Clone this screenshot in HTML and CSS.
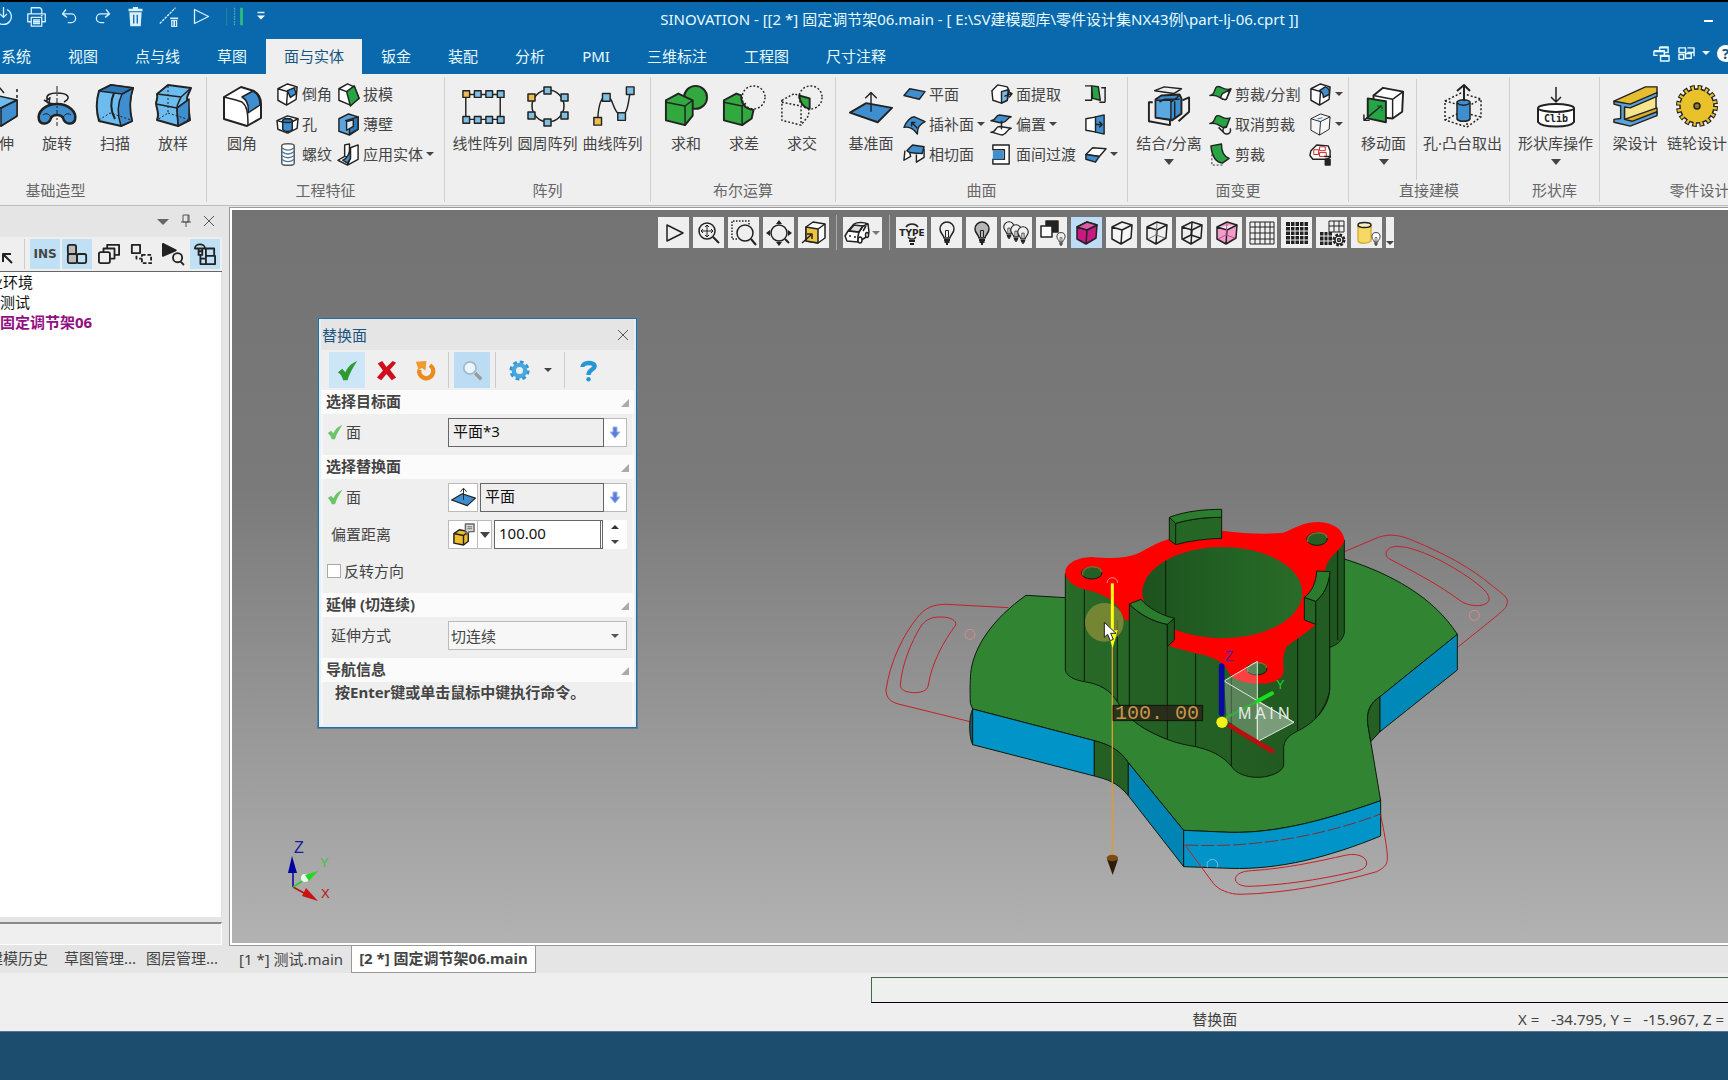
FILE: index.html
```
<!DOCTYPE html>
<html lang="zh-CN">

<head>
    <meta charset="UTF-8">
    <meta name="viewport" content="width=device-width, initial-scale=1.0">
    <title>SINOVATION</title>
    <link rel="stylesheet" href="styles.css">
</head>

<body>
    <!-- shared shapes -->
    <svg class="defs" aria-hidden="true">
        <symbol id="cube" viewBox="0 0 24 24">
            <path d="M2 6L12 1L22 4L21 17L11 23L2 18Z M2 6L12 9L22 4M12 9L11 23" />
        </symbol>
        <symbol id="bulb" viewBox="0 0 24 24">
            <path d="M9 17C9 14 5 12.500 5 8A7 7 0 0 1 19 8C19 12.500 15 14 15 17Z" />
            <path fill="none" d="M10.500 16V9.500H13.500V16" stroke-width="1" />
            <path d="M9 19H15M9.500 21H14.500M11 23H13" stroke-width="1.800" />
        </symbol>
        <symbol id="tick" viewBox="0 0 24 24">
            <path stroke="none" d="M1 14L6 10L9.500 14C12 8 16 4 23 1C19 8 14 15 12 23L7 23C6 19 4 16 1 14Z" />
        </symbol>
        <symbol id="plane" viewBox="0 0 40 32">
            <path fill="#3f8fd0" stroke-width="2" d="M1 20L18 10L39 17L26 29Z" />
            <path fill="none" stroke-width="1.500" d="M20 20V2M15 7L20 1L25 7" />
        </symbol>
        <symbol id="downarrow" viewBox="0 0 12 14">
            <path fill="#5b7fd6" stroke="#9db5ea" stroke-width="1" d="M4 1H8V6H11L6 12L1 6H4Z" />
        </symbol>
    </svg>

    <header class="titlebar">
        <div class="title-row">
            <div class="quick">
                <button aria-label="退出"><svg viewBox="0 0 24 24"><path d="M8 4A9 9 0 1 0 16 4M12 1V13M8 9L12 13L16 9" /></svg></button>
                <button aria-label="打印"><svg viewBox="0 0 24 24"><path d="M6 9V2H16L18 4V9M6 18H2V9H22V18H18M6 13H18V23H6ZM8 16H16M8 18H16M8 20H16M17 11H19" /></svg></button>
                <button aria-label="撤销"><svg viewBox="0 0 24 24"><path d="M8 4L4 9L9 13M4 9H14A5 5 0 0 1 14 19H10" /></svg></button>
                <button aria-label="重做"><svg viewBox="0 0 24 24"><path d="M16 4L20 9L15 13M20 9H10A5 5 0 0 0 10 19H14" /></svg></button>
                <button aria-label="删除"><svg viewBox="0 0 24 24"><path fill="#d8f0ff" stroke="none" d="M4 3H9V1H15V3H20V6H4ZM5 7H19L18 23H6Z" /><path stroke="#0a68ac" d="M10 10V20M14 10V20" /></svg></button>
                <button aria-label="删除线"><svg viewBox="0 0 24 24"><path stroke-dasharray="3 1" d="M2 20L20 2" /><path fill="#d8f0ff" stroke="none" d="M14 13H23V15H14ZM15 16H22V24H15Z" /><path stroke="#0a68ac" stroke-width="1" d="M17 17V23M20 17V23" /></svg></button>
                <button aria-label="运行"><svg viewBox="0 0 24 24"><path d="M4 4L20 12L4 20Z" /></svg></button>
                <button class="narrow" aria-label="线型"><svg viewBox="0 0 24 24"><path stroke="#2a8f9c" stroke-width="1" d="M3 2V22" /><path stroke="#3fb2a8" stroke-dasharray="2 1" d="M12 2V22" /><path stroke="#2fbf7d" stroke-width="3" d="M20 2V22" /></svg></button>
                <button class="tiny" aria-label="自定义"><svg viewBox="0 0 24 24"><path stroke-width="3" d="M5 5H19" /><path fill="#fff" stroke="none" d="M4 11H20L12 19Z" /></svg></button>
            </div>
            <h1 class="caption">SINOVATION - [[2 *] 固定调节架06.main - [ E:\SV建模题库\零件设计集NX43例\part-lj-06.cprt ]]</h1>
            <div class="win"><button aria-label="最小化"></button></div>
        </div>
        <div class="tab-row">
            <nav class="tabs">
                <a href="#">系统</a>
                <a href="#">视图</a>
                <a href="#">点与线</a>
                <a href="#">草图</a>
                <a href="#" class="active">面与实体</a>
                <a href="#">钣金</a>
                <a href="#">装配</a>
                <a href="#">分析</a>
                <a href="#">PMI</a>
                <a href="#">三维标注</a>
                <a href="#">工程图</a>
                <a href="#">尺寸注释</a>
            </nav>
            <div class="wintools">
                <button aria-label="层叠窗口"><svg viewBox="0 0 18 18"><path d="M7 2H16V8H12M7 2V5M7 3H16M1 6H12V11H7M1 6V11H5M1 7H12M8 11H17V17H8ZM8 12H17" /></svg></button>
                <button aria-label="平铺窗口"><svg viewBox="0 0 18 18"><path d="M1 3H8V8H1ZM10 3H17V8H10M1 10H6V15H1ZM8 9H14V14H8ZM17 8V12" /></svg></button>
                <button class="arrow-only" aria-label="更多"><i class="caret light"></i></button>
                <button class="help" aria-label="帮助">?</button>
            </div>
        </div>
    </header>

    <section class="ribbon">
        <div class="group g-base">
            <div class="tools">
                <button class="big"><svg viewBox="0 0 40 44"><path fill="#6cbcf0" d="M4 18L20 12L38 16V32L22 42L4 36Z" /><path fill="#3f8fd0" d="M22 24L38 16V32L22 42Z" /><path d="M4 18L22 24L38 16M20 26V4M15 9L20 3L25 9" /><path stroke-dasharray="3 3" d="M38 14V4" /></svg><span>拉伸</span></button>
                <button class="big"><svg viewBox="0 0 40 44"><path fill="#3f8fd0" stroke-width="2.500" d="M2 36C0 28 8 20 20 20C32 20 40 28 38 36C36 41 28 41 26 34C24 30 16 30 14 34C12 41 4 41 2 36Z" /><path d="M13 14C5 18 12 20 20 20M27 18C36 13 29 9 20 9C13 9 9 11 10 15M7 16L12 19L13 13" /><path stroke-dasharray="6 2 2 2" stroke-width="1" d="M20 2V42" /><path stroke-width="1" d="M6 31C10 28 13 31 14 34M34 31C30 28 27 31 26 34" /></svg><span>旋转</span></button>
                <button class="big"><svg viewBox="0 0 40 44"><path fill="#6cbcf0" stroke-width="2" d="M4 7L16 1L38 4C34 16 34 25 37 37L26 42L4 37C1 27 1 17 4 7Z" /><path fill="#3f8fd0" d="M27 10L38 4C34 16 34 25 37 37L26 42C22 30 22 20 27 10Z" /><path fill="#2f78b8" d="M4 7L16 1L38 4L27 10Z" /><path stroke-width="2" d="M19 9C15 18 15 26 20 35" /><path stroke-width="1" stroke-dasharray="2 2" d="M4 36L15 29L36 36" /></svg><span>扫描</span></button>
                <button class="big"><svg viewBox="0 0 40 44"><path fill="#6cbcf0" stroke-width="2" d="M4 10L15 1L38 4C36 10 32 13 35 20L37 36L25 42L4 36C7 29 3 24 3 19C4 15 5 14 4 10Z" /><path fill="#3f8fd0" d="M24 24L36 15V36L25 42Z" /><path d="M4 10L28 13L38 4M28 13C26 18 24 20 24 24L25 42M3 20L24 24L35 16" /><path stroke-width="1" stroke-dasharray="2 2" d="M15 2V29L4 36M15 29L37 36" /></svg><span>放样</span></button>
            </div>
            <div class="name">基础造型</div>
        </div>

        <div class="group g-feature">
            <div class="tools">
                <button class="big"><svg viewBox="0 0 40 44"><path fill="#fff" stroke-width="2" d="M2 13L19 3L32 7C37 10 39 14 39 20V34L25 42L2 35Z" /><path fill="#3f8fd0" d="M20 13L31 7C36 10 38 14 38 21L26 29C27 22 25 16 20 13Z" /><path d="M2 13C10 15 15 16 20 18C25 22 26 28 26 42" /></svg><span>圆角</span></button>
                <div class="col">
                    <button class="sm"><svg viewBox="0 0 24 24"><use href="#cube" fill="#fff" /><path fill="#3f8fd0" d="M12 8L19 5L21 11L15 15Z" /></svg>倒角</button>
                    <button class="sm"><svg viewBox="0 0 24 24"><path fill="#fff" d="M1 8L12 3L23 6L22 16L12 21L2 17Z" /><path d="M1 8L13 11L23 6M13 11V21" /><path fill="#3f8fd0" d="M7 8C9 5 15 5 17 8V17C15 20 9 20 7 17Z" /><ellipse fill="#2f78b8" cx="12" cy="8" rx="5" ry="2" /></svg>孔</button>
                    <button class="sm"><svg viewBox="0 0 24 24" stroke-width="1"><path fill="#fff" stroke="#555" d="M6 3C6 0 19 0 19 3V21C19 24 6 24 6 21Z" /><path stroke="#4d7396" d="M6 5C10 8 15 8 19 5M6 9C10 12 15 12 19 9M6 13C10 16 15 16 19 13M6 17C10 20 15 20 19 17" /></svg>螺纹</button>
                </div>
                <div class="col">
                    <button class="sm"><svg viewBox="0 0 24 24"><path fill="#fff" d="M2 6L11 1L18 4L23 16L14 23L2 18Z" /><path fill="#27a544" d="M10 9L18 3L23 16L14 24Z" /><path d="M2 6L10 9" /></svg>拔模</button>
                    <button class="sm"><svg viewBox="0 0 24 24"><path fill="#5aa5dc" d="M2 6L12 1L22 4V17L13 23L2 19Z" /><path fill="#2f78b8" d="M9 8L22 4V17L13 22V9Z" /><path fill="#d5e9f8" d="M10 9L17 7V14L10 18Z" /></svg>薄壁</button>
                    <button class="sm"><svg viewBox="0 0 24 24"><path fill="#fff" d="M8 2L13 1V15L8 14ZM1 18L8 14L13 15L11 23ZM14 5L22 2V17L11 23L14 16Z" /><path fill="#3f8fd0" d="M6 18C11 16 13 11 14 5V16L11 21Z" /></svg>应用实体<i class="caret"></i></button>
                </div>
            </div>
            <div class="name">工程特征</div>
        </div>

        <div class="group g-array">
            <div class="tools">
                <button class="big wide"><svg class="w44" viewBox="0 0 46 44"><path d="M5 10H41V36H5Z" /><g fill="#7fbfe2" stroke-width="1.500"><path d="M14 6h7v7h-7zM26 6h7v7h-7zM38 6h7v7h-7zM2 33h7v7h-7zM14 33h7v7h-7zM26 33h7v7h-7zM38 33h7v7h-7z" /><path fill="#eebd52" d="M2 6h7v7h-7z" /></g></svg><span>线性阵列</span></button>
                <button class="big wide"><svg viewBox="0 0 40 44"><circle cx="20" cy="22" r="16" /><g fill="#7fbfe2" stroke-width="1.500"><path d="M16 3h7v7h-7zM33 10h7v7h-7zM33 28h7v7h-7zM16 35h7v7h-7zM0 28h7v7h-7z" /><path fill="#eebd52" d="M0 10h7v7h-7z" /></g></svg><span>圆周阵列</span></button>
                <button class="big wide"><svg class="w44" viewBox="0 0 46 44"><path d="M7 36C8 18 11 12 16 12C24 12 22 28 31 32C39 32 39 15 41 8" /><g fill="#7fbfe2" stroke-width="1.500"><path d="M12 9h8v8h-8zM28 29h8v8h-8zM37 2h8v8h-8z" /><path fill="#eebd52" d="M3 34h8v8h-8z" /></g></svg><span>曲线阵列</span></button>
            </div>
            <div class="name">阵列</div>
        </div>

        <div class="group g-bool">
            <div class="tools">
                <button class="big"><svg class="w44" viewBox="0 0 46 44"><circle cx="33" cy="13" r="12" fill="#31a93e" stroke-width="2" /><path fill="#31a93e" stroke-width="2" d="M2 16L15 9L30 16V32L22 42L2 37Z" /><path d="M2 18L22 22L30 16M22 22V42" /></svg><span>求和</span></button>
                <button class="big"><svg class="w44" viewBox="0 0 46 44"><circle cx="33" cy="13" r="12" stroke-dasharray="2 2" /><path fill="#31a93e" stroke-width="2" d="M2 16L15 9L20 11C20 19 24 25 33 26L31 35L21 42L2 37Z" /><path d="M2 18L21 22V42M21 22L25 19" /></svg><span>求差</span></button>
                <button class="big"><svg class="w44" viewBox="0 0 46 44"><g stroke-dasharray="2 2"><circle cx="32" cy="13" r="12" /><path d="M2 16L15 9L30 16V32L22 42L2 37ZM2 18L22 22V42" /></g><path fill="#31a93e" stroke-width="2" d="M20 11L31 14V25C24 24 21 19 20 11Z" /></svg><span>求交</span></button>
            </div>
            <div class="name">布尔运算</div>
        </div>

        <div class="group g-surface">
            <div class="tools">
                <button class="big"><svg class="w44" viewBox="0 0 46 44"><path fill="#3f8fd0" stroke-width="2" d="M1 29L18 19L45 24L30 39Z" /><path d="M23 28V8M17 14L23 8L29 14" /></svg><span>基准面</span></button>
                <div class="col first">
                    <button class="sm"><svg viewBox="0 0 24 24"><path fill="#3f8fd0" d="M1 13L7 6L23 9L17 17Z" /></svg>平面</button>
                    <button class="sm"><svg viewBox="0 0 24 24"><path fill="#3f8fd0" d="M1 15C3 9 8 4 12 4L23 9C17 12 15 15 15 22C11 16 6 14 1 15Z" /><path d="M15 16L9 10M9 14V10H13" /></svg>插补面<i class="caret"></i></button>
                    <button class="sm"><svg viewBox="0 0 24 24"><path fill="#fff" d="M2 8L1 18L8 14L7 10M22 6V15L14 20V12" /><path fill="#3f8fd0" d="M7 5L10 2L22 4L20 11C15 11 14 11 7 10L4 8Z" /></svg>相切面</button>
                </div>
                <div class="col">
                    <button class="sm"><svg viewBox="0 0 24 24"><path fill="#fff" d="M2 8L8 2L18 4L20 8L18 18L12 21L3 18Z" /><path fill="#7ab8e8" d="M12 9L19 7L18 18L12 21Z" /><path d="M15 14L22 11M19 9L23 11L20 15" /></svg>面提取</button>
                    <button class="sm"><svg viewBox="0 0 24 24"><path fill="#3f8fd0" d="M1 8C7 8 5 2 10 2L22 4C17 5 18 10 13 10C9 11 5 8 1 8Z" /><path fill="#fff" d="M1 20C7 20 5 14 10 14L22 16C17 17 18 22 13 23C9 23 5 20 1 20Z" /><path d="M12 8V17" /></svg>偏置<i class="caret"></i></button>
                    <button class="sm"><svg viewBox="0 0 24 24"><path fill="#fff" d="M3 2H20V22H3V17H15V7H3Z" /><path fill="#3f8fd0" stroke="none" d="M3 8H14V17H3Z" /></svg>面间过渡</button>
                </div>
                <div class="col last">
                    <button class="sm" aria-label="桥接面"><svg viewBox="0 0 24 24"><path d="M1 3H8M1 18H8V3M22 5V20M22 20H16M18 5H23" /><path fill="#27a544" d="M8 3L15 4L17 18L9 16Z" /></svg></button>
                    <button class="sm" aria-label="延伸面"><svg viewBox="0 0 24 24"><path fill="#fff" d="M2 6L13 4V20L2 18Z" /><path fill="#3f8fd0" d="M12 4L21 2V22L12 20Z" /><path d="M12 12H19M16 9L19 12L16 15" /></svg></button>
                    <button class="sm" aria-label="圆角面"><svg viewBox="0 0 24 24"><path fill="#fff" d="M2 12L9 5L23 6L16 14Z" /><path fill="#3f8fd0" d="M2 12L16 14L12 20L2 17Z" /></svg><i class="caret"></i></button>
                </div>
            </div>
            <div class="name">曲面</div>
        </div>

        <div class="group g-change">
            <div class="tools">
                <button class="big wide"><svg class="w44" viewBox="0 0 46 44"><path fill="#eee" d="M8 6L18 2L36 4L28 9Z" /><path fill="#3f8fd0" stroke-width="2" d="M9 15L15 11L34 10L36 14V30L26 37L9 34Z" /><path fill="#5aa8e0" d="M9 16H25V36L9 34Z" /><path d="M13 18L18 15H34M25 18L34 11M29 17V34" /><path stroke-width="2" d="M6 18H2V38L24 42V36M37 16L44 13V28L33 38" /></svg><span>结合/分离</span><i class="caret lg"></i></button>
                <div class="col">
                    <button class="sm"><svg viewBox="0 0 24 24"><path fill="#27a544" d="M1 13C7 12 5 6 8 4C12 2 15 9 23 6L18 17C12 19 11 11 1 13Z" /><path fill="#fff" d="M14 11L22 7L18 17C15 18 13 16 12 15Z" /></svg>剪裁/分割</button>
                    <button class="sm"><svg viewBox="0 0 24 24"><path fill="#27a544" d="M1 11C7 10 5 5 8 3C12 1 15 8 22 5L18 15C12 17 11 9 1 11Z" /><path d="M22 16A4 4 0 1 1 18 14M10 15L15 20" /></svg>取消剪裁</button>
                    <button class="sm"><svg viewBox="0 0 24 24"><path fill="#27a544" d="M2 3L13 1C13 9 15 14 21 16L14 21C6 20 3 13 2 3Z" /><path stroke-dasharray="2 2" stroke-width="1" d="M3 12V23H14V21" /></svg>剪裁</button>
                </div>
                <div class="col last">
                    <button class="sm" aria-label="面替换"><svg viewBox="0 0 24 24"><use href="#cube" fill="#fff" /><path fill="#3f8fd0" d="M11 8L17 4C20 5 22 8 21 12L15 15C15 11 13 9 11 8Z" /></svg><i class="caret"></i></button>
                    <button class="sm" aria-label="面合并"><svg class="thin" viewBox="0 0 24 24"><use href="#cube" fill="#f7f7f7" /><path stroke="#2f78b8" d="M9 6L14 5" /></svg><i class="caret"></i></button>
                    <button class="sm" aria-label="删除面"><svg viewBox="0 0 24 24"><path fill="#fff" d="M2 8L8 2L20 3L22 8V15L18 17H4L1 13Z" /><path class="red" d="M5 7H10V12H5ZM11 4H17V8H11ZM11 10H18V14H11Z" /><path fill="#222" d="M16 14H23M17 17H22V23H17Z" /></svg></button>
                </div>
            </div>
            <div class="name">面变更</div>
        </div>

        <div class="group g-direct">
            <div class="tools">
                <button class="big line"><svg class="w44" viewBox="0 0 46 44"><path fill="#fff" stroke-width="2" d="M12 11L22 3L43 7L42 28L32 35L12 33Z" /><path d="M12 11L32 15L43 7M32 15V35" /><path fill="#27a544" stroke-width="2" d="M6 14L25 17V39L6 35Z" /><path stroke-width="1.500" d="M20 22L2 37M2 31V37H8" /><path stroke-width="1" stroke-dasharray="2 1" d="M16 22H21V27" /></svg><span>移动面</span><i class="caret lg"></i></button>
                <button class="big xl"><svg viewBox="0 0 40 44"><path stroke-dasharray="2 2" stroke-width="1.500" d="M2 17L18 9L38 15V33L24 43L2 36ZM2 17L24 23L38 15M24 23V43M2 36L18 28L38 33" /><path fill="#3f8fd0" d="M14 18C16 15 25 15 27 18V35C25 38 16 38 14 35Z" /><path d="M14 19C17 22 24 22 27 19" /><path stroke-width="2" d="M21 17V2M14 7L21 1L27 7" /></svg><span>孔·凸台取出</span></button>
            </div>
            <div class="name">直接建模</div>
        </div>

        <div class="group g-lib">
            <div class="tools">
                <button class="big xl"><svg viewBox="0 0 40 44"><path fill="#fff" stroke-width="2" d="M2 24V38C6 44 34 44 38 38V24" /><ellipse cx="20" cy="24" rx="18" ry="4" fill="#fff" stroke-width="2" /><path d="M20 3V18M15 13L20 18L25 13" /><text class="clib" x="20" y="38">Clib</text></svg><span>形状库操作</span><i class="caret lg"></i></button>
            </div>
            <div class="name">形状库</div>
        </div>

        <div class="group g-part">
            <div class="tools">
                <button class="big"><svg class="w44" viewBox="0 0 46 44"><path fill="#f7e48c" d="M12 20L45 8V32L12 38Z" /><path fill="#e6bd2f" stroke-width="1.500" d="M1 17L34 2H46V9L18 21Z" /><path fill="#d5ac2c" d="M12 36L46 24V30L20 40Z" /><path fill="#5aa2d8" stroke-width="1.500" d="M1 17L18 20L46 8V12L18 24L12 23V36L20 38L46 28V32L18 43L1 39V36L8 35V22L1 20Z" /></svg><span>梁设计</span></button>
                <button class="big"><svg viewBox="0 0 40 44"><circle cx="20" cy="22" r="18" stroke-width="6" stroke-dasharray="4.500 2.570" /><circle cx="20" cy="22" r="17" fill="#e9c22b" /><circle cx="20" cy="22" r="18" stroke="#e9c22b" stroke-width="4" stroke-dasharray="2.300 4.770" stroke-dashoffset="-1.100" /><circle cx="20" cy="22" r="3" fill="#8b7a2c" /></svg><span>链轮设计</span></button>
            </div>
            <div class="name">零件设计</div>
        </div>
    </section>

    <main class="workspace">
        <aside class="side">
            <div class="side-head">
                <button aria-label="菜单"><svg viewBox="0 0 16 16"><path fill="#666" stroke="none" d="M2 6H14L8 12Z" /></svg></button>
                <button aria-label="固定"><svg viewBox="0 0 16 16"><path d="M5 2H11V9H5ZM3 9H13M8 9V14M10 2V9" /></svg></button>
                <button aria-label="关闭"><svg viewBox="0 0 16 16"><path d="M3 3L13 13M13 3L3 13" /></svg></button>
            </div>
            <div class="side-tools">
                <button class="first" aria-label="收缩"><svg viewBox="0 0 24 24"><path d="M6 3V9H0M21 21L12 12M12 20V12H20" /></svg></button>
                <button class="on ins">INS</button>
                <button class="on" aria-label="零件"><svg viewBox="0 0 24 24"><rect fill="#bbb" x="2" y="2" width="9" height="10" rx="2" /><rect fill="#bbb" x="2" y="12" width="10" height="10" rx="2" /><rect x="12" y="12" width="10" height="10" rx="2" /></svg></button>
                <button aria-label="实体"><svg viewBox="0 0 24 24"><path d="M10 6V2H23V13H18M6 10V6H18V17H13" /><rect x="1" y="10" width="12" height="12" rx="2" /></svg></button>
                <button aria-label="选择"><svg viewBox="0 0 24 24"><path d="M2 2H11V11H2Z" /><path stroke-dasharray="4 2" d="M13 13H23V22H13ZM7 14V17H13" /></svg></button>
                <button aria-label="查找"><svg viewBox="0 0 24 24"><path fill="#222" d="M1 1L15 8L1 14Z" /><circle cx="17" cy="16" r="5" /><path d="M20 20L24 24" /></svg></button>
                <button class="on" aria-label="结构"><svg viewBox="0 0 24 24"><path d="M1 6C1 0 12 0 12 6ZM5 6H9V13H5ZM5 9H9M13 6H22V14H13ZM13 14H23V23H13ZM7 13V23H13M7 17H13" /></svg></button>
            </div>
            <ul class="tree">
                <li class="root">业环境</li>
                <li>测试</li>
                <li class="current">固定调节架06</li>
            </ul>
            <div class="side-info"></div>
            <div class="side-tabs">
                <a href="#" class="clip">建模历史</a>
                <a href="#">草图管理...</a>
                <a href="#">图层管理...</a>
            </div>
        </aside>

        <section class="view">
            <div class="canvas">
                <svg class="scene" viewBox="232 210 1496 733" preserveAspectRatio="xMinYMin slice">
                    <defs>
                        <linearGradient id="wall"><stop offset="0" stop-color="#286a28" /><stop offset=".5" stop-color="#246024" /><stop offset="1" stop-color="#1f561f" /></linearGradient>
                        <linearGradient id="bore"><stop offset="0" stop-color="#1d521e" /><stop offset=".6" stop-color="#236324" /><stop offset="1" stop-color="#296b28" /></linearGradient>
                    </defs>
                    <svg x="870" y="490" width="670" height="420" viewBox="0 0 2010 1260">
                        <!-- sketch profiles behind the plate -->
                        <g class="sketch">
                            <path d="M415 353L230 343C190 343 165 352 140 385C100 435 60 515 48 600C48 625 65 637 85 642L300 695" />
                            <path d="M215 381C240 381 262 392 257 405C220 455 185 520 175 585C172 605 150 608 130 608C105 606 92 600 91 585C95 530 120 460 155 405C170 388 185 380 215 381Z" />
                            <path d="M1423 185L1525 142C1560 130 1590 135 1630 152C1720 190 1800 230 1870 290C1905 318 1920 325 1908 350C1905 358 1890 370 1765 470" />
                            <path d="M1580 169C1550 170 1540 192 1555 205C1640 250 1700 280 1775 335C1800 350 1840 352 1855 335C1865 315 1840 295 1800 265C1740 225 1680 190 1610 172Z" />
                        </g>
                        <circle class="pt" cx="300" cy="433" r="15" />
                        <circle class="pt" cx="1813" cy="376" r="15" />

                        <!-- base plate -->
                        <g class="edge">
                            <path fill="#318532" d="M468 316L587 323L900 400L1423 207C1560 250 1690 320 1762 433L1530 620C1500 640 1490 660 1493 700L1532 932C1380 985 1230 1030 1080 1027L941 1021L775 818C750 780 720 765 673 752L308 657L301 640C300 600 300 580 302 550C310 470 370 385 468 316Z" />
                            <path fill="#246024" d="M1530 620C1500 640 1490 665 1493 700L1502 755L1530 725Z" />
                            <path fill="#0088b8" d="M1762 433V540L1530 725V620Z" />
                            <path fill="#20566a" d="M308 657C296 680 296 740 308 764Z" />
                            <path fill="#0094c8" d="M308 657L673 752V858L308 764Z" />
                            <path fill="#246024" d="M673 752C720 765 750 780 775 818V917C740 875 710 868 673 858Z" />
                            <path fill="#0084b4" d="M775 818L941 1021V1130L775 917Z" />
                            <path fill="#0094c8" d="M941 1021L1080 1027C1230 1030 1380 985 1532 932V1038C1380 1100 1230 1140 1080 1135L941 1130Z" />
                        </g>

                        <!-- boss side walls -->
                        <g class="edge">
                            <path fill="url(#wall)" d="M586 250V540C590 560 615 570 643 575C690 582 720 600 742 635C770 680 800 710 892 748C920 760 950 765 977 770C1020 780 1055 795 1084 828C1095 850 1130 862 1162 862C1200 862 1240 845 1241 825V770C1245 745 1260 735 1283 723C1340 695 1375 650 1379 600V472C1400 465 1415 455 1423 430V150L1000 300Z" />
                            <path d="M643 298V573M742 390V635M977 490V770M1084 560V828M1283 440V723M1403 175V450" />
                        </g>
                        <path fill="#fe0000" d="M586 250C584 222 620 202 665 201C720 206 765 206 800 192C835 175 860 158 897 147L1055 122C1120 130 1190 134 1240 128C1280 112 1300 97 1345 96C1390 98 1420 118 1423 150C1420 180 1370 195 1365 245L1337 403C1310 430 1275 450 1250 470C1235 500 1240 520 1241 545C1235 575 1195 583 1160 580C1110 578 1085 565 1075 545C1060 515 1030 500 977 490L893 467L778 392L762 388C745 330 700 312 643 298C610 288 588 272 586 250Z" />
                        <ellipse cx="1057" cy="308" rx="240" ry="137" fill="url(#bore)" />
                        <path class="edge" d="M887 212V385" />
                        <g class="edge" fill="#246024">
                            <ellipse cx="665" cy="249" rx="31" ry="18" />
                            <ellipse cx="1341" cy="147" rx="31" ry="19" />
                            <ellipse cx="1160" cy="537" rx="31" ry="18" />
                        </g>
                        <g fill="none" stroke="#7c6630" stroke-width="5">
                            <path d="M638 256C632 226 690 222 695 246M1314 156C1304 124 1370 120 1371 144M1133 546C1124 514 1188 510 1190 534" />
                        </g>

                        <!-- raised lugs -->
                        <g class="edge">
                            <path fill="#256625" d="M898 82L917 100C970 85 1010 82 1055 82V145C1010 146 960 152 917 164L898 150Z" />
                            <path fill="#2c7c2e" d="M898 82C950 62 1010 58 1055 58V82C1000 82 960 88 917 100Z" />
                            <path d="M917 100V164" />
                            <path fill="#246024" d="M778 342C810 375 850 395 892 403V748C840 728 800 705 778 680Z" />
                            <path fill="#1f561f" d="M892 403L913 385V450L892 470Z" />
                            <path fill="#2c7c2e" d="M778 342L813 328C830 350 870 375 913 385L892 403C850 395 810 375 778 342Z" />
                            <path fill="#225c22" d="M1337 334C1360 315 1375 290 1379 245V600C1375 625 1360 660 1337 685Z" />
                            <path fill="#256625" d="M1303 322L1337 334V403L1303 390Z" />
                            <path fill="#2c7c2e" d="M1303 322C1325 305 1338 280 1340 243L1380 245C1375 290 1360 315 1337 334Z" />
                        </g>

                        <!-- front sketch profile -->
                        <g class="sketch">
                            <path stroke-dasharray="40 8" stroke="#7d3038" d="M945 1065C1150 1075 1350 1040 1532 972" />
                            <path d="M945 1065L1030 1180C1045 1200 1080 1213 1110 1213C1250 1210 1400 1180 1520 1145C1550 1130 1553 1120 1552 1095C1548 1050 1537 1000 1532 975" />
                            <path d="M1145 1142C1250 1135 1340 1115 1430 1095C1470 1088 1492 1105 1490 1122C1488 1135 1470 1143 1440 1148C1340 1170 1240 1185 1140 1189C1110 1190 1095 1178 1096 1165C1100 1150 1120 1143 1145 1142Z" />
                        </g>
                        <path fill="none" stroke="#7cc4dc" stroke-width="3" d="M1013 1132A16 16 0 1 1 1041 1132" />

                        <!-- datum frame -->
                        <g fill="#fff" fill-opacity=".25" stroke="#dfe8df" stroke-width="3">
                            <path d="M1062 573L1162 514V755L1070 690Z" stroke="none" />
                            <path d="M1162 633L1272 697L1162 755Z" fill-opacity=".4" />
                            <path fill="none" d="M1162 755V514L1062 573L1272 697" />
                        </g>
                        <g fill="none" stroke-linecap="round">
                            <path stroke="#0a0aa0" stroke-width="17" d="M1055 528V670" />
                            <path stroke="#37b13a" stroke-width="7" d="M1070 682L1160 635" />
                            <path stroke="#16e01c" stroke-width="12" d="M1162 634L1206 610" />
                            <path stroke="#b80f0f" stroke-width="14" d="M1080 708L1206 783" />
                        </g>
                        <circle cx="1056" cy="697" r="17" fill="#f2f21c" />
                        <text class="axis" x="1064" y="512" fill="#4a22a8">Z</text>
                        <text class="axis sm-axis" x="1219" y="598" fill="#2fd032">Y</text>
                        <text class="main-label" x="1104" y="688">M A I N</text>

                        <!-- offset handle -->
                        <circle cx="703" cy="397" r="58" fill="#a89a3c" fill-opacity=".6" />
                        <path fill="none" stroke="#ff8a80" stroke-width="3" d="M711 279A16 16 0 0 1 743 279" />
                        <path stroke="#e29a2c" stroke-width="4" d="M727 460V1100" />
                        <path stroke="#ffff14" stroke-width="9" d="M727 280V440" />
                        <path fill="#ffff14" d="M712 425L743 420L728 474Z" />
                        <path fill="#2e1d08" d="M711 1108L728 1155L744 1108Z" />
                        <ellipse cx="727" cy="1104" rx="17" ry="10" fill="#7b4b14" />
                        <rect x="729" y="646" width="269" height="46" fill="#2a2418" fill-opacity=".85" stroke="#000" stroke-width="2" />
                        <text class="dim" x="735" y="687">100. 00</text>
                        <path fill="#fff" stroke="#222" stroke-width="3" d="M703 397V442L713 433L721 452L730 448L722 430H738Z" />
                    </svg>

                    <!-- view axes -->
                    <g class="triad">
                        <path stroke="#0000a0" d="M293 887V872" />
                        <path stroke="#b11" d="M293 887L304 893" />
                        <path stroke="#2c2" d="M293 887L304 880" />
                        <path fill="#0000a0" d="M292 856L297 873H288Z" />
                        <circle cx="305" cy="878" r="4" fill="#e9ffe9" />
                        <path fill="#20d820" d="M318 871L305 875L309 881Z" />
                        <path fill="#c11" d="M318 901L306 888L302 896Z" />
                        <text x="294" y="853" fill="#1a1a9a">Z</text>
                        <text class="s" x="320" y="867" fill="#3fc43f">Y</text>
                        <text class="s" x="321" y="898" fill="#b11">X</text>
                    </g>
                </svg>

                <div class="viewbar">
                    <button aria-label="播放"><svg viewBox="0 0 24 24"><path d="M5 4L21 12L5 20Z" /></svg></button>
                    <button aria-label="缩放"><svg viewBox="0 0 24 24"><circle cx="10" cy="10" r="8" /><path d="M16 16L22 22" stroke-width="2" /><path d="M10 4V16M4 10H16M8 6L10 4L12 6M8 14L10 16L12 14M6 8L4 10L6 12M14 8L16 10L14 12" stroke-width="1" /></svg></button>
                    <button aria-label="窗口缩放"><svg viewBox="0 0 24 24"><path stroke-dasharray="1.500 1.500" d="M5 18H0V0H17V4" /><circle cx="13" cy="12" r="8" /><path d="M19 18L24 24" stroke-width="2" /></svg></button>
                    <button aria-label="全部显示"><svg viewBox="0 0 24 24"><circle cx="12" cy="12" r="8" /><path d="M18 18L22 22" stroke-width="2" /><path fill="#222" stroke="none" d="M12 -1L15 3H9ZM12 25L15 21H9ZM-1 12L3 9V15ZM25 12L21 9V15Z" /></svg></button>
                    <button aria-label="正视"><svg viewBox="0 0 24 24"><path fill="#fff" d="M4 6L11 1L23 3V17L16 22L4 20Z" /><path fill="#ecc440" d="M4 6L16 8V22L4 20Z" /><path d="M16 8L23 3M0 22L9 14M5 13H10V18" /></svg></button>
                    <span class="vsep"></span>
                    <button class="car" aria-label="渲染"><svg viewBox="0 0 24 24"><path fill="#fff" d="M0 15L3 10L9 3C12 1 19 1 23 3L24 11L23 15L13 21L2 20Z" /><path fill="#ddd" d="M4 10L9 4L18 5L14 11Z" /><path d="M3 10L14 11L18 5L23 3M14 11L13 15L13 21M18 10L21 5M4 15H6M9 16H11" /><ellipse cx="15" cy="19" rx="2" ry="3" fill="#fff" /><ellipse cx="22" cy="14" rx="1.500" ry="2.500" fill="#fff" /></svg><i class="caret"></i></button>
                    <span class="vsep"></span>
                    <button aria-label="类型显示"><svg viewBox="0 0 24 24"><path d="M6 6A7 6 0 0 1 18 6M8 16L10 18H14L16 16" /><path stroke-width="2" d="M9 20H15M10 23H14" /><text class="type" x="12" y="15">TYPE</text></svg></button>
                    <button aria-label="显示"><svg viewBox="0 0 24 24"><use href="#bulb" /></svg></button>
                    <button aria-label="隐藏"><svg viewBox="0 0 24 24"><use href="#bulb" fill="#b5b5b5" /></svg></button>
                    <button aria-label="全部灯"><svg viewBox="0 0 24 24"><use href="#bulb" x="-5" y="0" width="18" height="18" fill="#f0f0f0" /><use href="#bulb" x="2" y="3" width="18" height="18" fill="#f0f0f0" /><use href="#bulb" x="9" y="5" width="18" height="18" fill="#f0f0f0" /></svg></button>
                    <button aria-label="图层显示"><svg viewBox="0 0 24 24"><path fill="#222" d="M6 0H18V11H6Z" /><path fill="#fff" d="M1 5H12V16H1Z" /><use href="#bulb" x="14" y="11" width="14" height="14" /></svg></button>
                    <button class="on" aria-label="着色"><svg viewBox="0 0 24 24"><use href="#cube" fill="#c81982" /><path fill="#e05aa8" d="M2 6L12 1L22 4L12 9Z" /></svg></button>
                    <button aria-label="消隐"><svg viewBox="0 0 24 24"><use href="#cube" fill="#f7f7f7" /></svg></button>
                    <button aria-label="隐线"><svg viewBox="0 0 24 24"><use href="#cube" /><path stroke-width="1" stroke="#777" d="M12 2L11 14L3 18M11 14L20 17" /></svg></button>
                    <button aria-label="线框"><svg viewBox="0 0 24 24"><use href="#cube" /><path d="M12 2L11 14L3 18M11 14L20 17" /></svg></button>
                    <button aria-label="半透明"><svg viewBox="0 0 24 24"><use href="#cube" fill="#f19ccb" /><path stroke="#b8558c" stroke-width="1" d="M12 2L11 14L3 18M11 14L20 17" /></svg></button>
                    <button aria-label="网格"><svg viewBox="0 0 24 24"><path stroke-width="1" d="M0 1H24V23H0ZM0 6H24M0 12H24M0 18H24M5 1V23M10 1V23M15 1V23M20 1V23" /></svg></button>
                    <button aria-label="密网格"><svg viewBox="0 0 24 24"><path fill="#222" stroke="none" d="M1 1H23V23H1Z" /><path stroke="#f0f0f0" stroke-width="1" d="M0 5.500H24M0 10H24M0 14.500H24M0 19H24M5.500 0V24M10 0V24M14.500 0V24M19 0V24" /></svg></button>
                    <button aria-label="网格设置"><svg viewBox="0 0 24 24"><path stroke-width="1" d="M9 0H24V11H9ZM9 5H24M14 0V11M19 0V11" /><path fill="#222" stroke="none" d="M0 11H12V24H0Z" /><path stroke="#f0f0f0" stroke-width="1" d="M0 15H12M0 20H12M4 11V24M8 11V24" /><circle cx="19" cy="19" r="5" fill="#f0f0f0" stroke-dasharray="2.500 1.400" stroke-width="3" /><circle cx="19" cy="19" r="4" fill="#fff" /><circle cx="19" cy="19" r="1.500" /></svg></button>
                    <button aria-label="圆柱显示"><svg viewBox="0 0 24 24"><path fill="#f6d864" stroke="#d4b23c" d="M3 4V20C5 23 13 23 16 20V4" /><ellipse cx="9.500" cy="4" rx="6.500" ry="2.500" fill="#fbf0b8" /><use href="#bulb" x="14" y="11" width="14" height="14" fill="#fff" /></svg></button>
                    <button class="more" aria-label="更多"><i class="caret"></i></button>
                </div>

                <form class="dialog">
                    <div class="dlg-title">
                        <h2>替换面</h2>
                        <button type="button" aria-label="关闭"><svg viewBox="0 0 16 16"><path d="M3 3L13 13M13 3L3 13" /></svg></button>
                    </div>
                    <div class="dlg-tools">
                        <button type="button" class="ok" aria-label="确定"><svg viewBox="0 0 24 24"><use href="#tick" fill="#2d9a34" /></svg></button>
                        <button type="button" aria-label="取消"><svg viewBox="0 0 24 24"><path fill="#cf101c" stroke="none" d="M2 4L7 1L12 8L19 1L23 3L16 11L23 20L18 23L12 16L6 23L1 20L8 12Z" /></svg></button>
                        <button type="button" class="mid" aria-label="重置"><svg viewBox="0 0 24 24"><path stroke="#ee8a1c" stroke-width="5" d="M17 6A8 8 0 1 1 5 11" /><path fill="#f09a30" stroke="none" d="M1 2L13 1L12 12L8 9L4 11Z" /></svg></button>
                        <span class="dsep"></span>
                        <button type="button" class="find" aria-label="预览"><svg viewBox="0 0 24 24"><path stroke="#9a9a9a" stroke-width="4" d="M15 15L22 22" /><circle cx="9" cy="9" r="7" fill="#e8f6ff" stroke="#a9b8c2" stroke-width="2" /></svg></button>
                        <span class="dsep"></span>
                        <button type="button" class="gear" aria-label="设置"><svg viewBox="0 0 24 24"><circle cx="12" cy="12" r="9" stroke="#2f96d2" stroke-width="5" stroke-dasharray="4 3.070" /><circle cx="12" cy="12" r="6.500" stroke="#46a8de" stroke-width="5" /></svg><i class="caret"></i></button>
                        <span class="dsep"></span>
                        <button type="button" class="q" aria-label="帮助"><svg viewBox="0 0 24 24"><path stroke="#2797d3" stroke-width="5" d="M5 8C5 2 19 2 19 7C19 11 12 11 12 17" /><circle cx="12" cy="22" r="2.500" fill="#2797d3" stroke="none" /></svg></button>
                    </div>

                    <h3>选择目标面</h3>
                    <div class="rows">
                        <div class="row">
                            <label for="target"><svg class="tick" viewBox="0 0 24 24"><use href="#tick" /></svg>面</label>
                            <div class="field"><input id="target" value="平面*3" readonly><button type="button" class="pick" aria-label="选取"><svg viewBox="0 0 12 14"><use href="#downarrow" /></svg></button></div>
                        </div>
                    </div>

                    <h3>选择替换面</h3>
                    <div class="rows">
                        <div class="row">
                            <label for="replace"><svg class="tick" viewBox="0 0 24 24"><use href="#tick" /></svg>面</label>
                            <div class="field"><button type="button" class="kind" aria-label="平面类型"><svg viewBox="0 0 40 32"><use href="#plane" /></svg></button><input id="replace" value="平面" readonly><button type="button" class="pick" aria-label="选取"><svg viewBox="0 0 12 14"><use href="#downarrow" /></svg></button></div>
                        </div>
                        <div class="row">
                            <label for="offset" class="pad">偏置距离</label>
                            <div class="field"><button type="button" class="kind" aria-label="数值来源"><svg viewBox="0 0 24 24"><path fill="#f0bc28" d="M2 11L8 7L17 9V19L12 23L2 21Z" /><path d="M2 11L12 13L17 9M12 13V23" /><path fill="#ddd" stroke="#666" d="M14 1H23V9H18L15 12V9H14Z" /><path stroke="#666" stroke-width="1" d="M16 4H21M16 6H21" /></svg></button><button type="button" class="drop" aria-label="来源列表"><i class="caret lg"></i></button><input id="offset" class="num" value="100.00"><span class="spin"><button type="button" aria-label="增加"><i class="caret up"></i></button><button type="button" aria-label="减少"><i class="caret"></i></button></span></div>
                        </div>
                        <label class="check"><input type="checkbox">反转方向</label>
                    </div>

                    <h3>延伸 (切连续)</h3>
                    <div class="rows">
                        <div class="row tall">
                            <label for="extend" class="pad">延伸方式</label>
                            <div class="field select"><select id="extend"><option>切连续</option></select></div>
                        </div>
                    </div>

                    <h3>导航信息</h3>
                    <p class="hint">按Enter键或单击鼠标中键执行命令。</p>
                </form>
            </div>
            <div class="doc-tabs">
                <a href="#">[1 *] 测试.main</a>
                <a href="#" class="active">[2 *] 固定调节架06.main</a>
            </div>
        </section>
    </main>

    <div class="command"><input type="text" aria-label="命令"></div>
    <footer class="status">
        <span>替换面</span>
        <span class="coords">X =&nbsp;&nbsp; -34.795, Y =&nbsp;&nbsp; -15.967, Z =</span>
    </footer>
    <div class="taskbar"></div>
</body>

</html>
```

FILE: styles.css
```
* {
    box-sizing: border-box;
}

body {
    margin: 0;
    height: 100vh;
    display: flex;
    flex-direction: column;
    overflow: hidden;
    background: #efefef;
    color: #444;
    font-family: "Noto Sans", "Noto Sans CJK SC", sans-serif;
    font-size: 15px;
    line-height: 20px;
}

h1, h2, h3, p, ul {
    margin: 0;
    padding: 0;
    font-size: 15px;
    font-weight: normal;
}

a {
    color: inherit;
    text-decoration: none;
    white-space: nowrap;
}

button {
    flex: none;
    display: flex;
    align-items: center;
    justify-content: center;
    margin: 0;
    padding: 0;
    border: 0;
    background: none;
    color: inherit;
    font: inherit;
    white-space: nowrap;
}

svg {
    flex: none;
    fill: none;
    stroke: #222;
    stroke-width: 1.5;
    stroke-linejoin: round;
    overflow: visible;
}

.defs {
    position: absolute;
    width: 0;
    height: 0;
}

.caret {
    flex: none;
    border: 4px solid transparent;
    border-top-color: #444;
    border-bottom: 0;
}

.caret.light {
    border-top-color: #fff;
}

.caret.up {
    border-top: 0;
    border-bottom: 4px solid #333;
}

.caret.lg {
    border-width: 6px 5px 0;
}

/* title bar */
.titlebar {
    flex: none;
    border-top: 2px solid #000;
    background: #0a68ac;
    color: #e6fbff;
}

.title-row {
    display: flex;
    height: 37px;
}

.quick {
    display: flex;
    align-items: center;
    height: 28px;
    margin-left: -13px;
}

.quick button {
    width: 33px;
}

.quick .tiny {
    width: 20px;
}

.quick svg {
    width: 21px;
    height: 21px;
    stroke: #d8f0ff;
}

.quick .tiny svg {
    width: 12px;
    height: 12px;
}

.caption {
    flex: 1;
    text-align: center;
    line-height: 35px;
    white-space: nowrap;
}

.win {
    width: 40px;
    display: flex;
    justify-content: center;
    align-items: center;
}

.win button {
    width: 9px;
    height: 2px;
    background: #fff;
}

.tab-row {
    display: flex;
    justify-content: space-between;
    height: 35px;
}

.tabs {
    display: flex;
    gap: 1px;
    margin-left: -17px;
}

.tabs a {
    padding: 0 18px;
    line-height: 34px;
}

.tabs .active {
    background: #efefef;
    color: #16567f;
}

.wintools {
    display: flex;
    align-items: center;
    height: 28px;
    margin-right: -6px;
    gap: 8px;
}

.wintools .arrow-only {
    margin: 0 -1px;
}

.wintools svg {
    width: 17px;
    height: 17px;
    stroke: #e6fbff;
}

.wintools .help {
    width: 17px;
    height: 17px;
    border-radius: 50%;
    background: #fff;
    color: #16567f;
    font-weight: bold;
}

/* ribbon */
.ribbon {
    flex: none;
    display: flex;
    height: 132px;
    overflow: hidden;
    border-bottom: 1px solid #bdbdbd;
}

.group {
    position: relative;
    flex: none;
    display: flex;
    flex-direction: column;
    margin: 3px 0;
    border-right: 1px solid #cfcfcf;
}

.tools {
    flex: 1;
    display: flex;
    padding: 2px 6px 0;
}

.name {
    text-align: center;
    color: #666;
    line-height: 20px;
    padding-bottom: 2px;
}

.g-base {
    width: 302px;
    margin-left: -95px;
}

.g-base .tools {
    justify-content: flex-end;
    padding-right: 4px;
}

.g-feature {
    width: 238px;
}

.g-array {
    width: 206px;
}

.g-array .tools {
    padding: 2px 5px 0;
}

.g-bool {
    width: 185px;
}

.g-surface {
    width: 292px;
}

.g-change {
    width: 221px;
}

.g-direct {
    width: 161px;
}

.g-lib {
    width: 90px;
}

.g-part {
    width: 200px;
}

.g-direct .tools {
    padding: 2px 0 0 2px;
}

.g-lib .tools {
    padding: 2px 0 0;
}

.g-part .tools {
    padding: 2px 0 0 4px;
}

.big {
    flex-direction: column;
    justify-content: flex-start;
    width: 58px;
    padding-top: 5px;
}

.big.wide {
    width: 65px;
}

.g-change .big {
    width: 70px;
}

.g-part .big {
    width: 62px;
}

.big.xl {
    width: 91px;
}

.big.line {
    width: 66px;
    border-right: 1px solid #cfcfcf;
}

.big svg {
    width: 40px;
    height: 44px;
}

.big svg.w44 {
    width: 44px;
}

.big span {
    margin-top: 5px;
}

.big .caret {
    margin-top: 6px;
}

.col {
    display: flex;
    flex-direction: column;
    padding-left: 5px;
}

.col.first {
    padding-left: 3px;
}

.col.last {
    padding-left: 8px;
}

.sm {
    height: 30px;
    justify-content: flex-start;
    gap: 3px;
}

.sm svg {
    width: 23px;
    height: 23px;
}

svg.thin,
.red {
    stroke-width: 1;
}

.red {
    stroke: #c22;
}

.clib {
    font: bold 10px "DejaVu Sans Mono", monospace;
    text-anchor: middle;
    fill: #222;
    stroke: none;
}

/* left panel */
.workspace {
    flex: 1;
    display: flex;
    min-height: 0;
}

.side {
    flex: none;
    width: 229px;
    padding-right: 7px;
    display: flex;
    flex-direction: column;
    background: #e5e5e5;
}

.side-head {
    display: flex;
    justify-content: flex-end;
    gap: 7px;
    height: 31px;
    padding: 0 5px 2px 0;
}

.side-head svg,
.dlg-title svg {
    width: 16px;
    height: 16px;
    stroke: #555;
    stroke-width: 1;
}

.side-tools {
    display: flex;
    gap: 2px;
    height: 35px;
    padding: 2px 0;
    background: #efefef;
    border-bottom: 1px solid #666;
}

.side-tools button {
    width: 30px;
    height: 30px;
}

.side-tools .first {
    width: 25px;
    margin-right: 3px;
    border-right: 1px solid #ccc;
    padding-right: 18px;
}

.side-tools .on {
    background: #bfe0f5;
}

.side-tools .ins {
    font: bold 12px "DejaVu Sans", sans-serif;
}

.side-tools svg {
    width: 22px;
    height: 22px;
    stroke-width: 2;
}

.side-tools .first svg {
    width: 24px;
    height: 24px;
}

.tree {
    flex: 1;
    list-style: none;
    background: #fff;
    color: #111;
    border-right: 1px solid #ddd;
    overflow: hidden;
    white-space: nowrap;
}

.tree .root {
    text-indent: -12px;
}

.tree .current {
    color: #930f82;
    font-weight: bold;
}

.side-info {
    height: 23px;
    margin: 5px 0 1px;
    background: #efefef;
    border-top: 2px solid #8a8a8a;
    border-right: 1px solid #fff;
    border-bottom: 1px solid #fff;
}

.side-tabs {
    display: flex;
    gap: 10px;
    height: 27px;
    overflow: hidden;
    line-height: 25px;
}

.side-tabs .clip {
    margin-left: -12px;
    margin-right: 6px;
}

/* model view */
.view {
    flex: 1;
    min-width: 0;
    display: flex;
    flex-direction: column;
    background: #e5e5e5;
}

.canvas {
    position: relative;
    flex: 1;
    overflow: hidden;
    border: 2px solid #fff;
    border-right: 0;
    outline: 1px solid #9a9a9a;
    margin: 2px 0 1px 1px;
    background: linear-gradient(#737373, #7a7a7a 38%, #b2b2b2);
}

.scene {
    position: absolute;
    inset: 0;
    width: 100%;
    height: 100%;
    stroke: none;
}

.scene svg {
    stroke: none;
}

.edge {
    stroke: #0b1c0b;
    stroke-width: 3;
}

.sketch {
    fill: none;
    stroke: #c4202a;
    stroke-width: 3;
}

.pt {
    fill: none;
    stroke: #e08a8a;
    stroke-width: 3;
}

.axis {
    font: 44px "Liberation Sans", sans-serif;
}

.sm-axis {
    font-size: 36px;
}

.main-label {
    font: 48px "Liberation Sans", sans-serif;
    fill: #e4ece4;
}

.dim {
    font: 60px "Liberation Mono", monospace;
    fill: #c9964c;
}

.triad text {
    font: 16px "Liberation Sans", sans-serif;
}

.triad .s {
    font-size: 13px;
}

.viewbar {
    position: relative;
    display: flex;
    gap: 4px;
    margin: 7px 0 0 426px;
}

.viewbar button {
    width: 31px;
    height: 31px;
    background: #efefef;
}

.viewbar .on {
    background: #bedcf5;
}

.viewbar svg {
    width: 24px;
    height: 24px;
}

.viewbar .car {
    width: 39px;
    gap: 3px;
}

.viewbar .more {
    width: 8px;
    align-items: flex-end;
    padding-bottom: 3px;
}

.viewbar .car .caret {
    border-top-color: #777;
}

.vsep {
    width: 1px;
    height: 35px;
    margin: -2px 2px -2px 3px;
    background: #aaa;
}

.type {
    font: bold 9px "DejaVu Sans", sans-serif;
    text-anchor: middle;
    fill: #222;
    stroke: none;
}

/* replace face dialog */
.dialog {
    position: absolute;
    left: 86px;
    top: 108px;
    width: 319px;
    padding: 0 2px 2px;
    border: 1px solid #2b6d96;
    outline: 1px solid #5d8097;
    background: #e3f1fa;
    color: #444;
}

.dlg-title {
    display: flex;
    justify-content: space-between;
    align-items: center;
    height: 31px;
    padding: 0 3px 0 1px;
    background: #e5e5e5;
}

.dlg-title h2 {
    color: #1b5580;
}

.dlg-tools {
    display: flex;
    align-items: center;
    height: 40px;
    padding-left: 8px;
    background: #efefef;
}

.dlg-tools button {
    width: 36px;
    height: 36px;
}

.dlg-tools button + button {
    margin-left: 3px;
}

.dlg-tools svg {
    width: 21px;
    height: 21px;
}

.dlg-tools .ok {
    background: #cde6f7;
}

.dlg-tools .find {
    background: #bcdcf4;
}

.dlg-tools .gear {
    width: 58px;
    gap: 14px;
}

.dsep {
    width: 1px;
    height: 36px;
    margin: 0 5px;
    background: #ccc;
}

.dialog h3 {
    position: relative;
    height: 24px;
    padding: 0 5px;
    background: #fbfbfb;
    font-weight: bold;
    line-height: 23px;
}

.dialog h3::after {
    content: "";
    position: absolute;
    right: 5px;
    top: 9px;
    border: 4px solid;
    border-color: transparent #aaa #aaa transparent;
}

.rows {
    display: flex;
    flex-direction: column;
    gap: 7px;
    padding: 4px 5px 7px 4px;
    border: solid #f6f6f6;
    border-width: 0 2px;
    background: #efefef;
}

.row {
    display: flex;
    height: 30px;
}

.row > label {
    flex: 1;
    display: flex;
    align-items: center;
    gap: 3px;
    padding-bottom: 2px;
}

.row .pad {
    padding-left: 4px;
}

.tick {
    width: 16px;
    height: 16px;
    fill: #6cc46a;
}

.field {
    display: flex;
    width: 179px;
    height: 29px;
}

.field input {
    flex: 1;
    min-width: 0;
    padding: 0 4px 4px;
    border: 1px solid #666;
    background: #efefef;
    color: #111;
    font: inherit;
}

.field .num {
    background: #fff;
    border-right: 3px double #666;
}

.pick,
.kind,
.drop {
    width: 23px;
    border: 1px solid #bbb;
    background: #fff;
}

.pick {
    border-left: 0;
}

.pick svg {
    width: 12px;
    height: 14px;
}

.kind {
    width: 30px;
}

.kind svg {
    width: 25px;
    height: 23px;
}

.kind + input {
    margin-left: 2px;
}

.drop {
    width: 14px;
    margin-right: 2px;
    border-left: 0;
}

.spin {
    width: 24px;
    display: flex;
    flex-direction: column;
    background: #fff;
}

.spin button {
    flex: 1;
}

.check {
    display: flex;
    align-items: center;
    gap: 3px;
    height: 28px;
    margin-bottom: 1px;
}

.check input {
    appearance: none;
    width: 14px;
    height: 14px;
    margin: 0;
    border: 1px solid #aaa;
    background: #fff;
}

.field.select {
    position: relative;
}

.select select {
    appearance: none;
    width: 100%;
    padding: 0 2px;
    border: 1px solid #bbb;
    border-radius: 0;
    background: #f7f7f7;
    color: #444;
    font: inherit;
}

.select::after {
    content: "";
    position: absolute;
    right: 8px;
    top: 13px;
    border: 4px solid transparent;
    border-top-color: #555;
    border-bottom: 0;
}

.hint {
    height: 43px;
    padding-left: 12px;
    border: solid #f6f6f6;
    border-width: 0 2px;
    background: #efefef;
    font-weight: bold;
    white-space: nowrap;
}

/* bottom */
.doc-tabs {
    flex: none;
    display: flex;
    height: 27px;
    padding-left: 10px;
    gap: 8px;
}

.doc-tabs a {
    line-height: 27px;
}

.doc-tabs .active {
    padding: 0 7px;
    background: #fff;
    border: 1px solid #999;
    border-top: 0;
    font-weight: bold;
    line-height: 24px;
}

.command {
    flex: none;
    display: flex;
    justify-content: flex-end;
    height: 34px;
    padding: 4px 0;
}

.command input {
    width: calc(50% - 7px);
    border: 1px solid #47654c;
    border-right: 0;
    border-bottom-color: #000;
    background: #edf0ed;
}

.status {
    flex: none;
    display: flex;
    justify-content: space-between;
    height: 24px;
    padding: 2px 4px 0 69%;
    white-space: nowrap;
}

.taskbar {
    flex: none;
    height: 49px;
    border-top: 1px solid #5a7488;
    background: #1c4c6e;
}
```
